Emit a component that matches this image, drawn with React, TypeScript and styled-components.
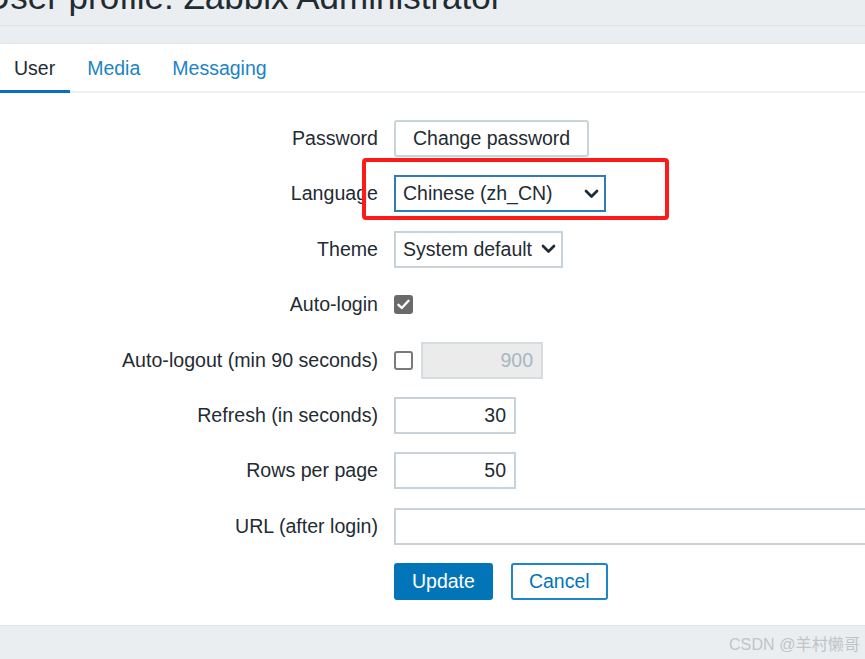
import React from "react";
import styled, { createGlobalStyle } from "styled-components";

const Global = createGlobalStyle`
  html, body { margin: 0; padding: 0; background: #ffffff; }
  body { font-family: "Liberation Sans", Arial, sans-serif; color: #1f2c33; overflow: hidden; }
  * { box-sizing: border-box; }
`;

const Page = styled.div`
  width: 865px;
  height: 659px;
  display: flex;
  flex-direction: column;
  overflow: hidden;
  background: #ffffff;
`;

const Header = styled.header`
  height: 26px;
  background: #ebeef0;
  border-bottom: 1px solid #dde3e6;
  overflow: hidden;
`;

const Title = styled.h1`
  margin: -21px 0 0 -15px;
  font-size: 35px;
  line-height: 35px;
  font-weight: normal;
  color: #1f2c33;
  white-space: nowrap;
`;

const SubBar = styled.div`
  height: 18px;
  background: #ebeef0;
  border-bottom: 1px solid #e1e5e8;
`;

const Tabs = styled.nav`
  height: 49px;
  display: flex;
  gap: 3px;
  border-bottom: 2px solid #eef0f1;
`;

const Tab = styled.div<{ $active?: boolean }>`
  padding: 2px 15px 0 14px;
  display: flex;
  align-items: center;
  font-size: 19.5px;
  color: ${(p) => (p.$active ? "#1f2c33" : "#1b84c6")};
  border-bottom: 3px solid ${(p) => (p.$active ? "#0a6ebd" : "transparent")};
  margin-bottom: -2px;
`;

const Body = styled.main`
  flex: 1;
  padding-top: 27px;
`;

const Form = styled.div`
  display: grid;
  grid-template-columns: 378px 1fr;
  column-gap: 16px;
  row-gap: 18.4px;
  grid-auto-rows: 37px;
`;

const Label = styled.div`
  display: flex;
  align-items: center;
  justify-content: flex-end;
  font-size: 19.6px;
  color: #1f2c33;
  white-space: nowrap;
`;

const Cell = styled.div`
  position: relative;
  display: flex;
  align-items: center;
  gap: 8px;
`;

const Button = styled.button<{ $variant?: "primary" | "outline" | "plain" }>`
  height: 37px;
  padding: 0 ${(p) => (p.$variant === "plain" ? "17px" : "16px")};
  font-family: inherit;
  font-size: 19.5px;
  border-radius: 3px;
  border: 2px solid
    ${(p) =>
      p.$variant === "primary" ? "#0275b8" : p.$variant === "outline" ? "#1c86c8" : "#cad3d8"};
  background: ${(p) => (p.$variant === "primary" ? "#0275b8" : "#ffffff")};
  color: ${(p) =>
    p.$variant === "primary" ? "#ffffff" : p.$variant === "outline" ? "#0275b8" : "#1f2c33"};
`;

const Select = styled.div<{ $w: number; $focus?: boolean }>`
  width: ${(p) => p.$w}px;
  height: 37px;
  border: 2px solid ${(p) => (p.$focus ? "#2f7db8" : "#c8d2d8")};
  display: flex;
  align-items: center;
  justify-content: space-between;
  padding: 0 5px 0 7px;
  font-size: 19.5px;
  color: #1f2c33;
  white-space: nowrap;
`;

const Input = styled.div<{ $w?: number; $disabled?: boolean }>`
  width: ${(p) => (p.$w ? `${p.$w}px` : "calc(100% + 20px)")};
  height: 37px;
  border: 2px solid ${(p) => (p.$disabled ? "#d5dde1" : "#c8d2d8")};
  background: ${(p) => (p.$disabled ? "#ebebeb" : "#ffffff")};
  color: ${(p) => (p.$disabled ? "#a7b7c2" : "#1f2c33")};
  font-size: 19.5px;
  display: flex;
  align-items: center;
  justify-content: flex-end;
  padding: 0 8px;
  flex-shrink: 0;
`;

const Check = styled.div<{ $checked?: boolean }>`
  width: 19px;
  height: 19px;
  border-radius: 3px;
  border: 2px solid ${(p) => (p.$checked ? "#6a6a6a" : "#7a7a7a")};
  background: ${(p) => (p.$checked ? "#6a6a6a" : "#ffffff")};
  display: flex;
  align-items: center;
  justify-content: center;
  flex-shrink: 0;
`;

const Highlight = styled.div`
  position: absolute;
  left: -32px;
  top: -17px;
  width: 307px;
  height: 62px;
  border: 4px solid #ff1a1a;
  border-radius: 4px;
  pointer-events: none;
`;

const ButtonRow = styled.div`
  display: flex;
  gap: 18px;
  align-items: center;
`;

const Footer = styled.footer`
  height: 34px;
  background: #ebeef0;
  border-top: 1px solid #e2e6e8;
  display: flex;
  align-items: center;
  justify-content: flex-end;
  padding-right: 5px;
`;

const Watermark = styled.span`
  font-family: "Liberation Sans", "Noto Sans CJK SC", sans-serif;
  font-size: 16px;
  color: #bfc4c7;
  letter-spacing: 0.1px;
`;

const Chevron = () => (
  <svg width="15" height="10" viewBox="0 0 15 10">
    <polyline points="2,2 7.5,7.5 13,2" fill="none" stroke="#1f2c33" strokeWidth="2.7" strokeLinecap="round" strokeLinejoin="round" />
  </svg>
);

const Tick = () => (
  <svg width="13" height="11" viewBox="0 0 13 11">
    <polyline points="1.5,5.8 4.8,9 11.5,1.8" fill="none" stroke="#ffffff" strokeWidth="2.4" strokeLinecap="round" strokeLinejoin="round" />
  </svg>
);

export default function App() {
  return (
    <Page>
      <Global />
      <Header>
        <Title>User profile: Zabbix Administrator</Title>
      </Header>
      <SubBar />
      <Tabs>
        <Tab $active>User</Tab>
        <Tab>Media</Tab>
        <Tab>Messaging</Tab>
      </Tabs>
      <Body>
        <Form>
          <Label>Password</Label>
          <Cell>
            <Button $variant="plain">Change password</Button>
          </Cell>

          <Label>Language</Label>
          <Cell>
            <Select $w={212} $focus>
              <span>Chinese (zh_CN)</span>
              <Chevron />
            </Select>
            <Highlight />
          </Cell>

          <Label>Theme</Label>
          <Cell>
            <Select $w={169}>
              <span>System default</span>
              <Chevron />
            </Select>
          </Cell>

          <Label>Auto-login</Label>
          <Cell>
            <Check $checked>
              <Tick />
            </Check>
          </Cell>

          <Label>Auto-logout (min 90 seconds)</Label>
          <Cell>
            <Check />
            <Input $w={122} $disabled>900</Input>
          </Cell>

          <Label>Refresh (in seconds)</Label>
          <Cell>
            <Input $w={122}>30</Input>
          </Cell>

          <Label>Rows per page</Label>
          <Cell>
            <Input $w={122}>50</Input>
          </Cell>

          <Label>URL (after login)</Label>
          <Cell>
            <Input />
          </Cell>

          <div />
          <ButtonRow>
            <Button $variant="primary">Update</Button>
            <Button $variant="outline">Cancel</Button>
          </ButtonRow>
        </Form>
      </Body>
      <Footer>
        <Watermark>CSDN @羊村懒哥</Watermark>
      </Footer>
    </Page>
  );
}
